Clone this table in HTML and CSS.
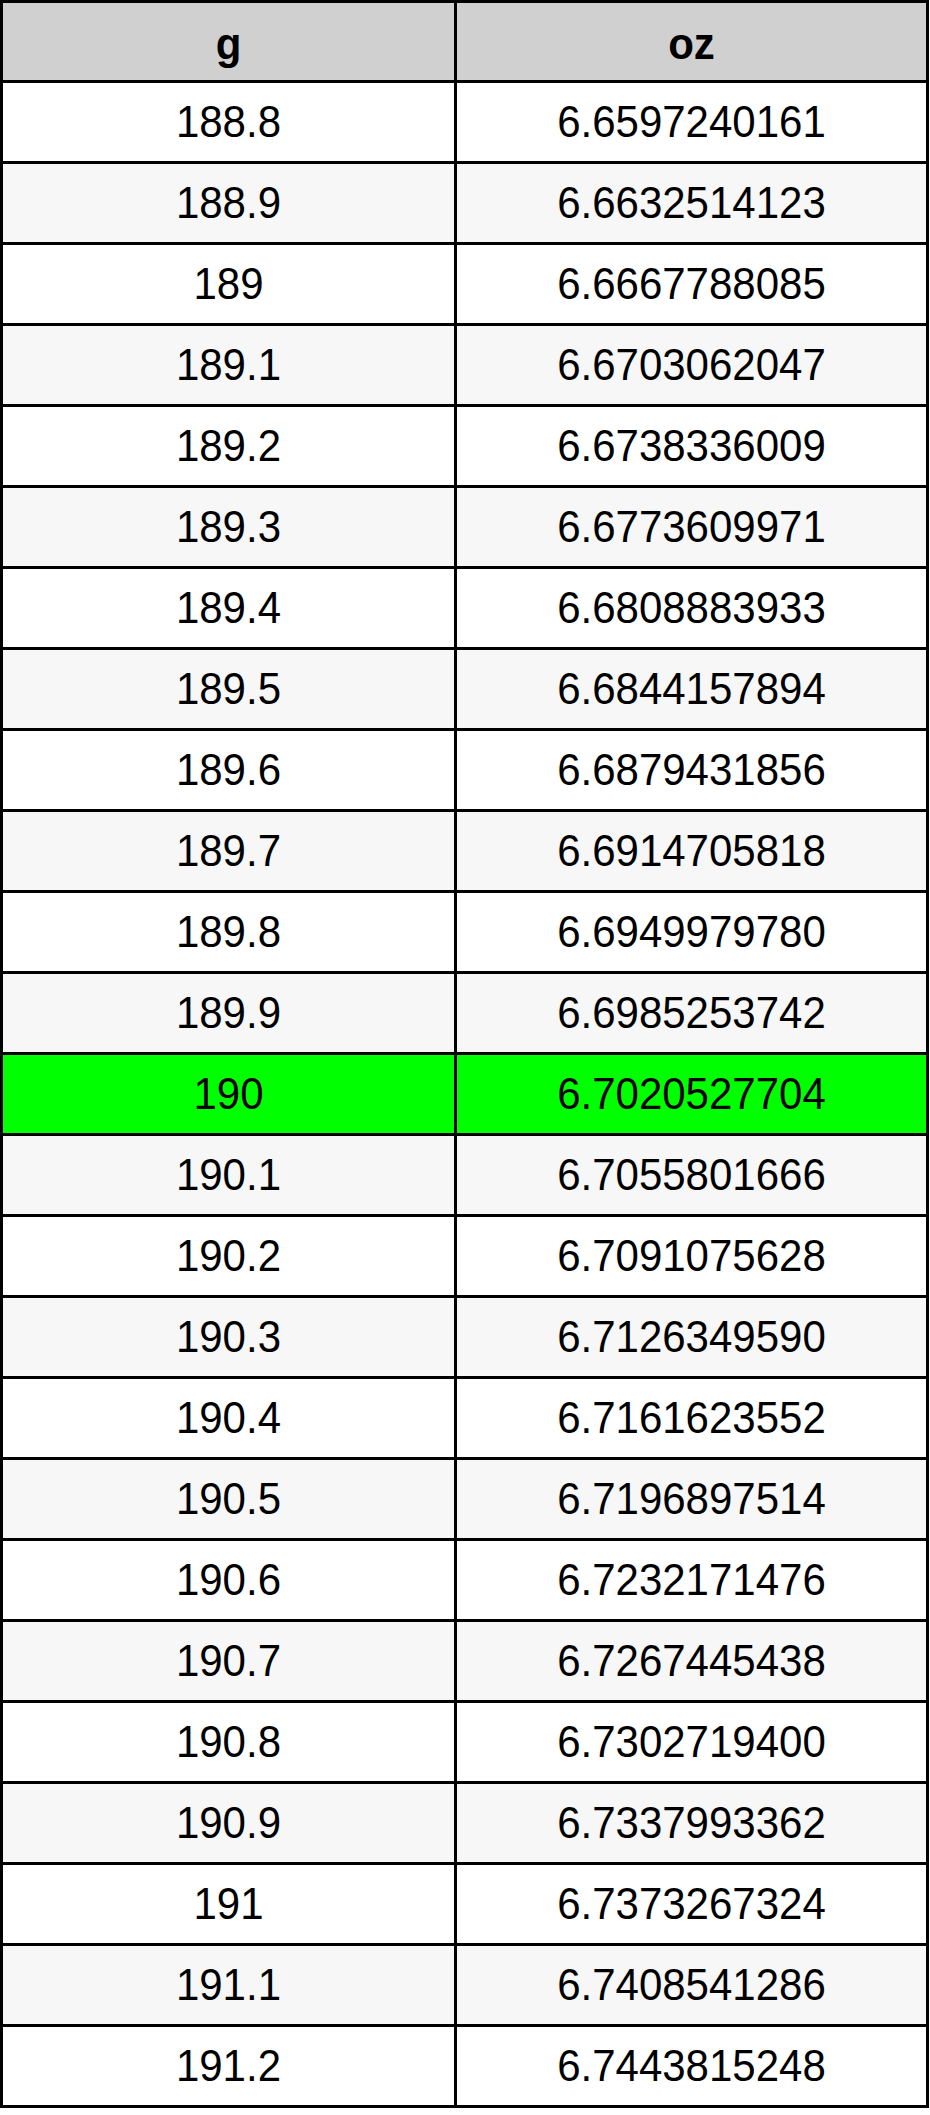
FILE: index.html
```html
<!DOCTYPE html>
<html>
<head>
<meta charset="utf-8">
<link rel="stylesheet" href="styles.css">
</head>
<body>
<table class="conv">
<thead>
<tr><th class="c1"><span class="v">g</span></th><th class="c2"><span class="v">oz</span></th></tr>
</thead>
<tbody>
<tr><td><span class="v">188.8</span></td><td><span class="v">6.6597240161</span></td></tr>
<tr class="alt"><td><span class="v">188.9</span></td><td><span class="v">6.6632514123</span></td></tr>
<tr><td><span class="v">189</span></td><td><span class="v">6.6667788085</span></td></tr>
<tr class="alt"><td><span class="v">189.1</span></td><td><span class="v">6.6703062047</span></td></tr>
<tr><td><span class="v">189.2</span></td><td><span class="v">6.6738336009</span></td></tr>
<tr class="alt"><td><span class="v">189.3</span></td><td><span class="v">6.6773609971</span></td></tr>
<tr><td><span class="v">189.4</span></td><td><span class="v">6.6808883933</span></td></tr>
<tr class="alt"><td><span class="v">189.5</span></td><td><span class="v">6.6844157894</span></td></tr>
<tr><td><span class="v">189.6</span></td><td><span class="v">6.6879431856</span></td></tr>
<tr class="alt"><td><span class="v">189.7</span></td><td><span class="v">6.6914705818</span></td></tr>
<tr><td><span class="v">189.8</span></td><td><span class="v">6.6949979780</span></td></tr>
<tr class="alt"><td><span class="v">189.9</span></td><td><span class="v">6.6985253742</span></td></tr>
<tr class="hl"><td><span class="v">190</span></td><td><span class="v">6.7020527704</span></td></tr>
<tr class="alt"><td><span class="v">190.1</span></td><td><span class="v">6.7055801666</span></td></tr>
<tr><td><span class="v">190.2</span></td><td><span class="v">6.7091075628</span></td></tr>
<tr class="alt"><td><span class="v">190.3</span></td><td><span class="v">6.7126349590</span></td></tr>
<tr><td><span class="v">190.4</span></td><td><span class="v">6.7161623552</span></td></tr>
<tr class="alt"><td><span class="v">190.5</span></td><td><span class="v">6.7196897514</span></td></tr>
<tr><td><span class="v">190.6</span></td><td><span class="v">6.7232171476</span></td></tr>
<tr class="alt"><td><span class="v">190.7</span></td><td><span class="v">6.7267445438</span></td></tr>
<tr><td><span class="v">190.8</span></td><td><span class="v">6.7302719400</span></td></tr>
<tr class="alt"><td><span class="v">190.9</span></td><td><span class="v">6.7337993362</span></td></tr>
<tr><td><span class="v">191</span></td><td><span class="v">6.7373267324</span></td></tr>
<tr class="alt"><td><span class="v">191.1</span></td><td><span class="v">6.7408541286</span></td></tr>
<tr><td><span class="v">191.2</span></td><td><span class="v">6.7443815248</span></td></tr>
</tbody>
</table>
</body>
</html>
```
FILE: styles.css
```css
html, body {
  margin: 0;
  padding: 0;
  background: #ffffff;
}
.conv {
  border-collapse: separate;
  border-spacing: 0;
  border-top: 3px solid #000;
  border-left: 3px solid #000;
  table-layout: fixed;
  width: 929px;
  font-family: "Liberation Sans", Arial, sans-serif;
  font-size: 42px;
  color: #000;
}
.conv th, .conv td {
  border-right: 3px solid #000;
  border-bottom: 3px solid #000;
  padding: 0;
  text-align: center;
  vertical-align: middle;
}
.conv th {
  background: #d0d0d0;
  font-weight: bold;
  box-sizing: border-box;
  height: 80px;
  padding-top: 4px;
}
.conv .c1 { width: 451px; }
.conv .c2 { width: 469px; }
.conv td {
  height: 78px;
  background: #ffffff;
}
.conv tr.alt td { background: #f7f7f7; }
.conv tr.hl td { background: #00ff00; }
.v {
  display: inline-block;
  transform: scaleY(1.07);
}
```
